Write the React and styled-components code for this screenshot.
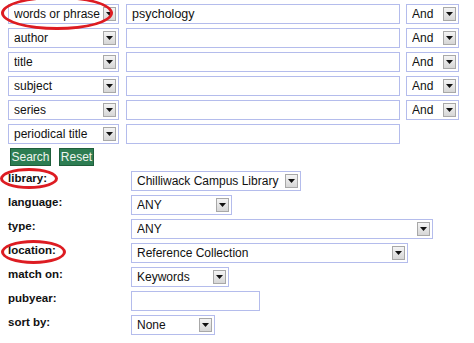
import React from "react";
import styled, { createGlobalStyle } from "styled-components";

const Global = createGlobalStyle`
  body {
    margin: 0;
    background: #fff;
    font-family: "Liberation Sans", Arial, sans-serif;
  }
`;

const fields = [
  { field: "words or phrase", value: "psychology", op: true },
  { field: "author", value: "", op: true },
  { field: "title", value: "", op: true },
  { field: "subject", value: "", op: true },
  { field: "series", value: "", op: true },
  { field: "periodical title", value: "", op: false },
];

const limits = [
  { label: "library:", kind: "select", value: "Chilliwack Campus Library", w: 170 },
  { label: "language:", kind: "select", value: "ANY", w: 101 },
  { label: "type:", kind: "select", value: "ANY", w: 302 },
  { label: "location:", kind: "select", value: "Reference Collection", w: 277 },
  { label: "match on:", kind: "select", value: "Keywords", w: 98 },
  { label: "pubyear:", kind: "input", value: "", w: 129 },
  { label: "sort by:", kind: "select", value: "None", w: 84 },
];

const Select = ({ value, width }) => (
  <SelectBox $w={width}>
    <SelectText>{value}</SelectText>
    <ArrowBtn>
      <svg width="7" height="4" viewBox="0 0 7 4">
        <path d="M0 0h7L3.5 4z" fill="#111" />
      </svg>
    </ArrowBtn>
  </SelectBox>
);

const App = () => (
  <>
    <Global />
    <Page>
      <Terms>
        {fields.map((f) => (
          <TermRow key={f.field}>
            <Select value={f.field} width={111} />
            <TextBox $w={274}>{f.value}</TextBox>
            {f.op && <Select value="And" width={53} />}
          </TermRow>
        ))}
      </Terms>
      <Buttons>
        <GreenBtn $w={41}>Search</GreenBtn>
        <GreenBtn $w={35}>Reset</GreenBtn>
      </Buttons>
      <Limits>
        {limits.map((l) => (
          <LimitRow key={l.label}>
            <Label>{l.label}</Label>
            {l.kind === "select" ? (
              <Select value={l.value} width={l.w} />
            ) : (
              <TextBox $w={l.w} />
            )}
          </LimitRow>
        ))}
      </Limits>
      <Ring $x={1} $y={-4} $w={112} $h={34} />
      <Ring $x={0} $y={168} $w={58} $h={21} />
      <Ring $x={1} $y={240} $w={65} $h={24} />
    </Page>
  </>
);

export default App;

const Page = styled.div`
  position: relative;
  width: 474px;
  height: 343px;
  overflow: hidden;
  padding: 4px 0 0 8px;
  box-sizing: border-box;
`;

const Terms = styled.div`
  display: flex;
  flex-direction: column;
  gap: 4px;
`;

const TermRow = styled.div`
  display: flex;
  align-items: center;
  gap: 6px;
  height: 20px;
  & > *:nth-child(2) {
    margin-left: 1px;
  }
`;

const SelectBox = styled.div`
  width: ${(p) => p.$w}px;
  height: 20px;
  box-sizing: border-box;
  border: 1px solid #b4bcec;
  background: #fff;
  display: flex;
  align-items: center;
  padding: 0 2px 0 5px;
`;

const SelectText = styled.span`
  flex: 1;
  font-size: 12px;
  color: #111;
  white-space: nowrap;
  overflow: hidden;
`;

const ArrowBtn = styled.span`
  flex: none;
  width: 13px;
  height: 14px;
  box-sizing: border-box;
  border: 1px solid #a8a8a8;
  background: linear-gradient(#f4f4f4, #d6d6d6);
  display: flex;
  align-items: center;
  justify-content: center;
`;

const TextBox = styled.div`
  width: ${(p) => p.$w}px;
  height: 20px;
  box-sizing: border-box;
  border: 1px solid #b4bcec;
  padding: 0 5px;
  font-size: 12.5px;
  line-height: 18px;
  color: #111;
`;

const Buttons = styled.div`
  display: flex;
  gap: 8px;
  margin: 4px 0 0 2px;
`;

const GreenBtn = styled.div`
  width: ${(p) => p.$w}px;
  height: 18px;
  box-sizing: border-box;
  background: #2d7d52;
  border: 1px solid #1f5e3b;
  color: #eef4ef;
  font-size: 12px;
  line-height: 16px;
  text-align: center;
`;

const Limits = styled.div`
  display: flex;
  flex-direction: column;
  gap: 5px;
  margin-top: 5px;
`;

const LimitRow = styled.div`
  display: flex;
  align-items: flex-start;
  height: 19px;
`;

const Label = styled.div`
  width: 123px;
  font-size: 11.5px;
  font-weight: bold;
  color: #111;
  line-height: 14px;
`;

const Ring = styled.div`
  position: absolute;
  left: ${(p) => p.$x}px;
  top: ${(p) => p.$y}px;
  width: ${(p) => p.$w}px;
  height: ${(p) => p.$h}px;
  box-sizing: border-box;
  border: 3px solid #dd1c22;
  border-radius: 50%;
`;
